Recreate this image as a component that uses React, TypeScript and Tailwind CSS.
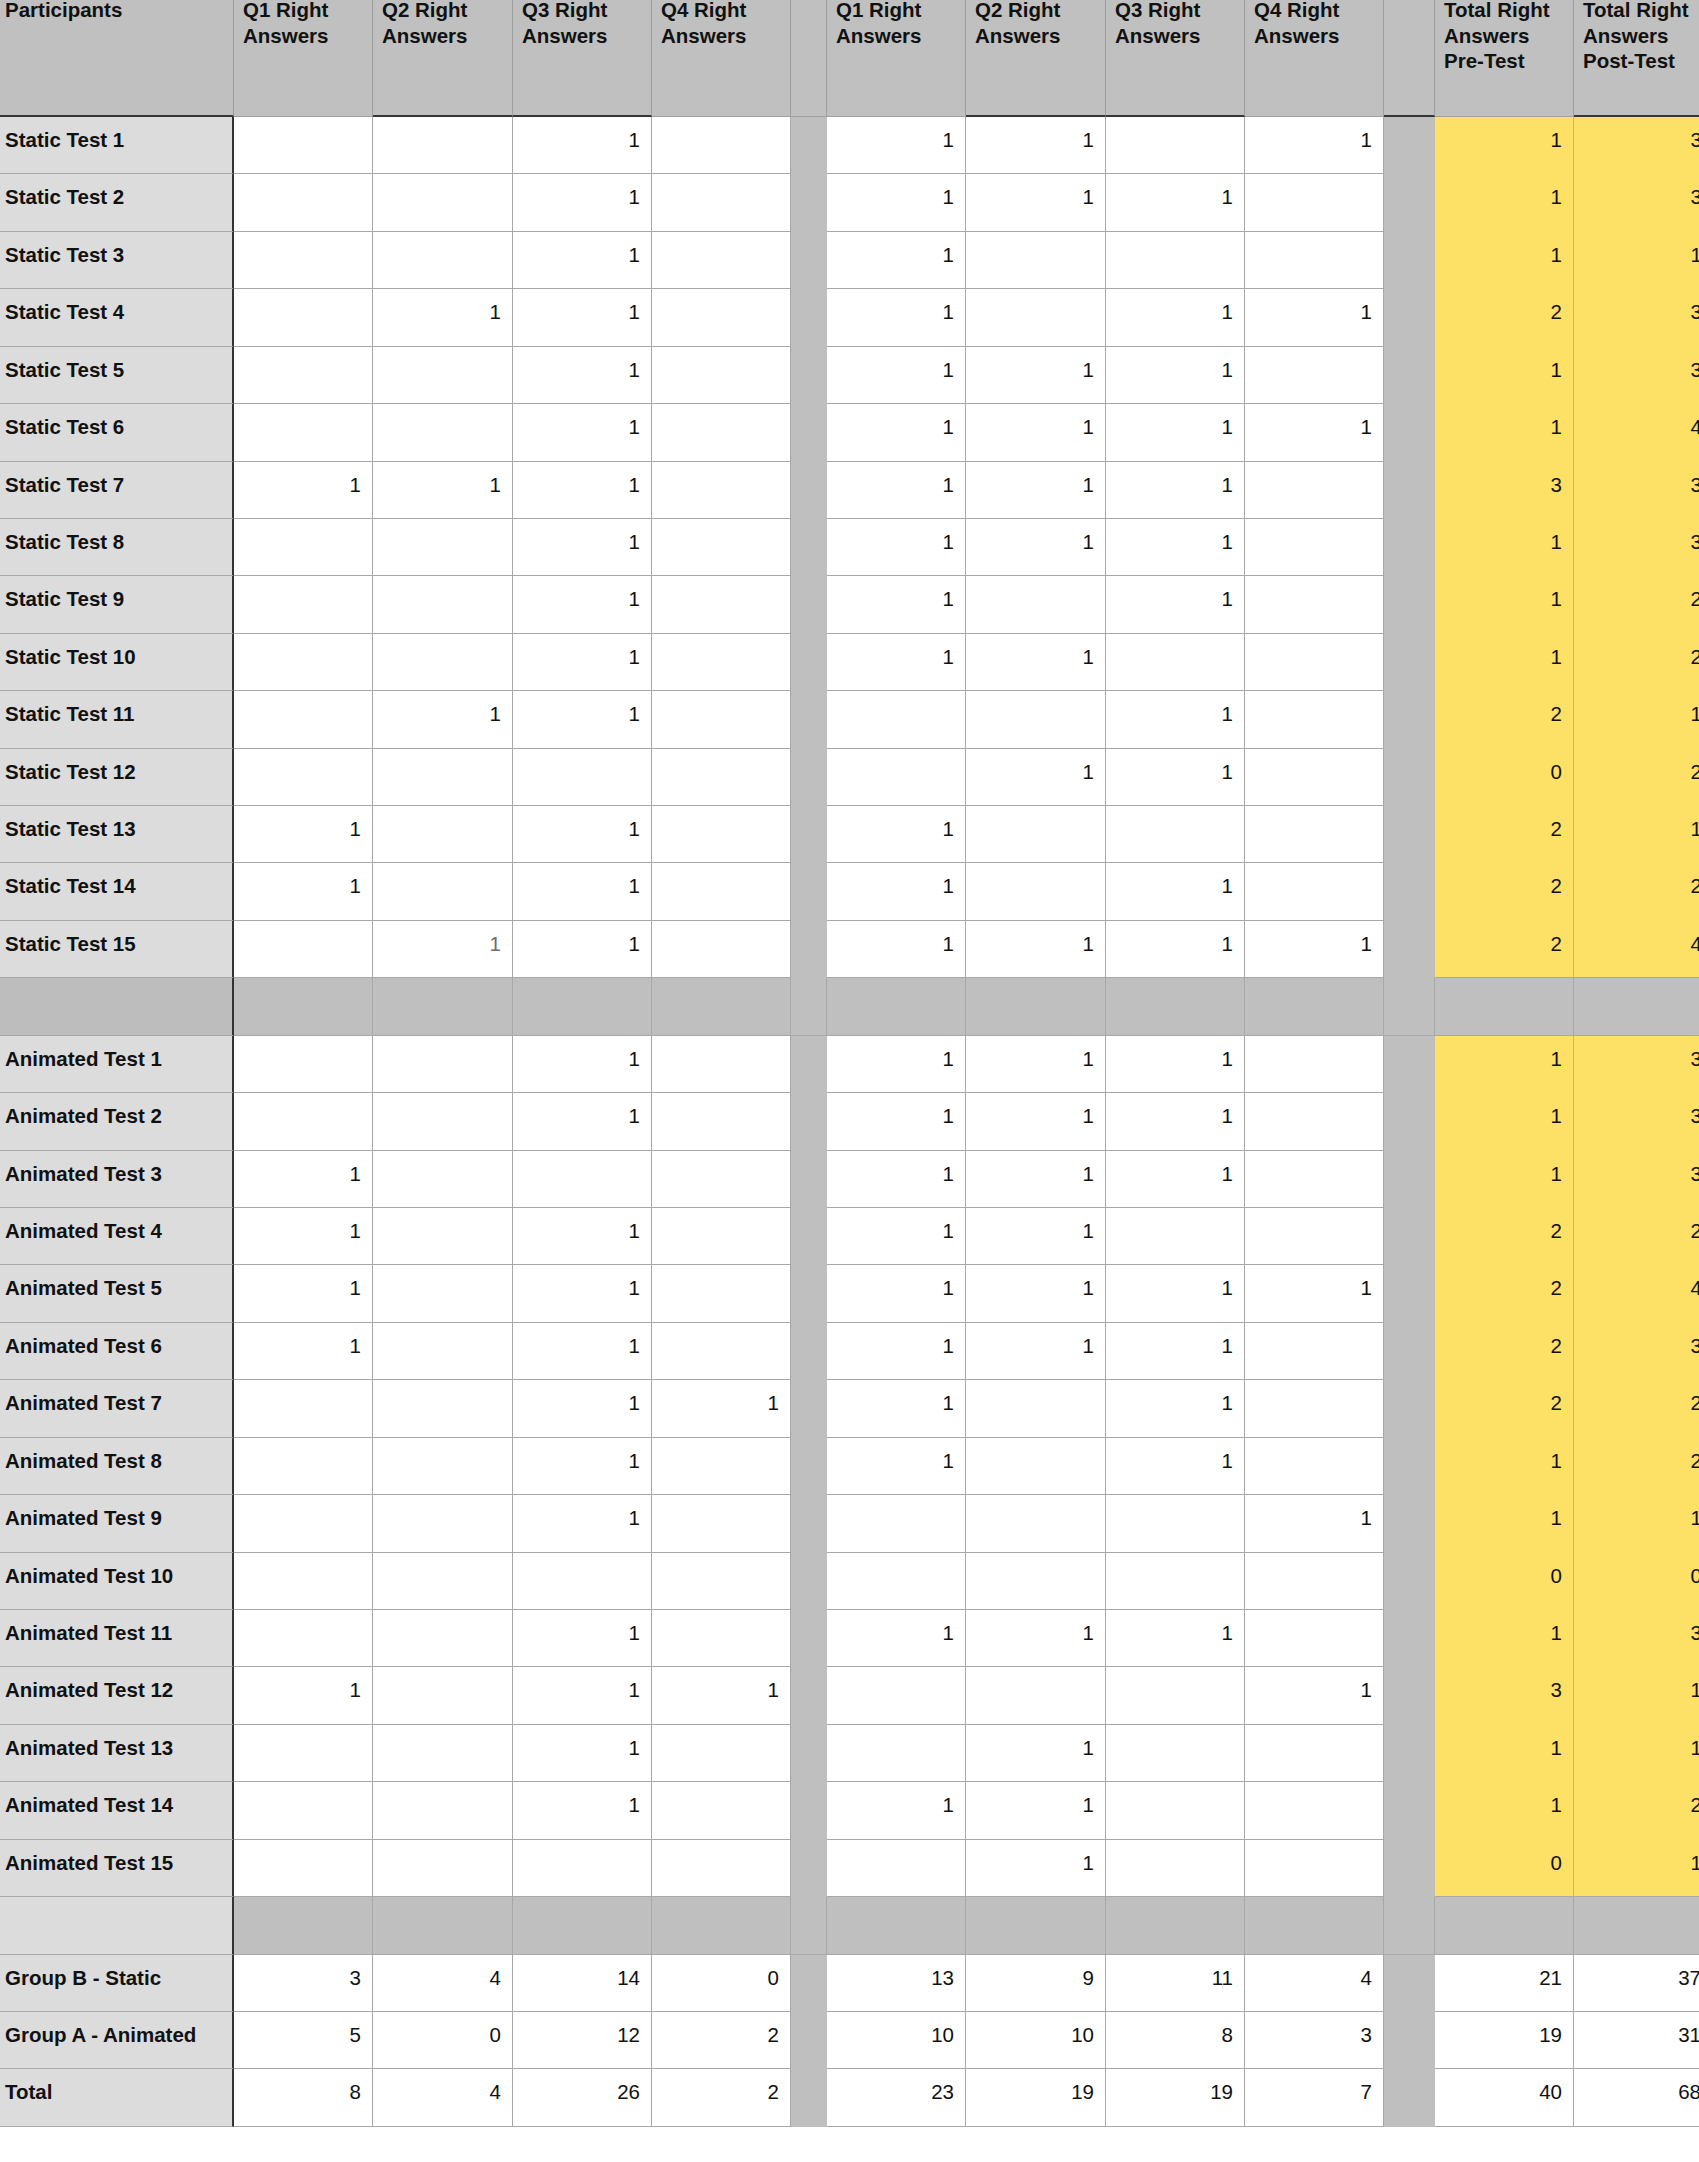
import React from "react";

// pre / post answers written as 4-char strings, "1" = right answer
type DataRow = { name: string; pre: string; post: string; tp: number; tq: number };

const staticRows: DataRow[] = [
  { name: "Static Test 1", pre: "0010", post: "1101", tp: 1, tq: 3 },
  { name: "Static Test 2", pre: "0010", post: "1110", tp: 1, tq: 3 },
  { name: "Static Test 3", pre: "0010", post: "1000", tp: 1, tq: 1 },
  { name: "Static Test 4", pre: "0110", post: "1011", tp: 2, tq: 3 },
  { name: "Static Test 5", pre: "0010", post: "1110", tp: 1, tq: 3 },
  { name: "Static Test 6", pre: "0010", post: "1111", tp: 1, tq: 4 },
  { name: "Static Test 7", pre: "1110", post: "1110", tp: 3, tq: 3 },
  { name: "Static Test 8", pre: "0010", post: "1110", tp: 1, tq: 3 },
  { name: "Static Test 9", pre: "0010", post: "1010", tp: 1, tq: 2 },
  { name: "Static Test 10", pre: "0010", post: "1100", tp: 1, tq: 2 },
  { name: "Static Test 11", pre: "0110", post: "0010", tp: 2, tq: 1 },
  { name: "Static Test 12", pre: "0000", post: "0110", tp: 0, tq: 2 },
  { name: "Static Test 13", pre: "1010", post: "1000", tp: 2, tq: 1 },
  { name: "Static Test 14", pre: "1010", post: "1010", tp: 2, tq: 2 },
  { name: "Static Test 15", pre: "0110", post: "1111", tp: 2, tq: 4 },
];

const animatedRows: DataRow[] = [
  { name: "Animated Test 1", pre: "0010", post: "1110", tp: 1, tq: 3 },
  { name: "Animated Test 2", pre: "0010", post: "1110", tp: 1, tq: 3 },
  { name: "Animated Test 3", pre: "1000", post: "1110", tp: 1, tq: 3 },
  { name: "Animated Test 4", pre: "1010", post: "1100", tp: 2, tq: 2 },
  { name: "Animated Test 5", pre: "1010", post: "1111", tp: 2, tq: 4 },
  { name: "Animated Test 6", pre: "1010", post: "1110", tp: 2, tq: 3 },
  { name: "Animated Test 7", pre: "0011", post: "1010", tp: 2, tq: 2 },
  { name: "Animated Test 8", pre: "0010", post: "1010", tp: 1, tq: 2 },
  { name: "Animated Test 9", pre: "0010", post: "0001", tp: 1, tq: 1 },
  { name: "Animated Test 10", pre: "0000", post: "0000", tp: 0, tq: 0 },
  { name: "Animated Test 11", pre: "0010", post: "1110", tp: 1, tq: 3 },
  { name: "Animated Test 12", pre: "1011", post: "0001", tp: 3, tq: 1 },
  { name: "Animated Test 13", pre: "0010", post: "0100", tp: 1, tq: 1 },
  { name: "Animated Test 14", pre: "0010", post: "1100", tp: 1, tq: 2 },
  { name: "Animated Test 15", pre: "0000", post: "0100", tp: 0, tq: 1 },
];

const summaryRows = [
  { name: "Group B - Static", values: [3, 4, 14, 0, 13, 9, 11, 4, 21, 37] },
  { name: "Group A - Animated", values: [5, 0, 12, 2, 10, 10, 8, 3, 19, 31] },
  { name: "Total", values: [8, 4, 26, 2, 23, 19, 19, 7, 40, 68] },
];

const headers = [
  "Participants",
  "Q1 Right Answers",
  "Q2 Right Answers",
  "Q3 Right Answers",
  "Q4 Right Answers",
  "",
  "Q1 Right Answers",
  "Q2 Right Answers",
  "Q3 Right Answers",
  "Q4 Right Answers",
  "",
  "Total Right Answers Pre-Test",
  "Total Right Answers Post-Test",
];

// which header cells get the heavy dark underline
const heavy = [true, false, true, true, false, false, false, true, true, false, true, false, true];

const cols =
  "grid grid-cols-[234px_139px_140px_139px_139px_36px_139px_140px_139px_139px_51px_139px_139px]";

const numCell = "bg-white text-right pr-[11px] pt-[10px] border-r border-b border-[#a8a8a8]";
const gapCell = "bg-[#bfbfbf]";
const nameCell =
  "bg-[#dcdcdc] font-bold pl-[5px] pt-[10px] whitespace-nowrap border-b border-b-[#a8a8a8] border-r-2 border-r-[#333333]";

const Header = () => (
  <div className={`${cols} h-[117px]`}>
    {headers.map((h, i) => (
      <div
        key={i}
        className={`bg-[#bfc0bf] font-bold leading-[25.5px] border-r border-r-[#9e9e9e] ${
          i === 0 ? "pl-[5px]" : "pl-[9px] pr-[4px]"
        } ${heavy[i] ? "border-b-2 border-b-[#363636]" : "border-b border-b-[#9e9e9e]"}`}
      >
        <div className="-mt-[3px]">{h}</div>
      </div>
    ))}
  </div>
);

const Row = ({ row, last }: { row: DataRow; last: boolean }) => {
  const dim = row.name === "Static Test 15";
  const cell = (v: string, k: number, faint = false) => (
    <div key={k} className={numCell}>
      <span className={faint ? "text-[#6b6b6b]" : ""}>{v === "1" ? "1" : ""}</span>
    </div>
  );
  return (
    <div className={`${cols} h-[57.43px]`}>
      <div className={nameCell}>{row.name}</div>
      {row.pre.split("").map((v, k) => cell(v, k, dim && k === 1))}
      <div className={gapCell} />
      {row.post.split("").map((v, k) => cell(v, k + 10))}
      <div className={gapCell} />
      <div
        className={`bg-[#fde066] text-right pr-[11px] pt-[10px] border-r border-r-[#c9b767] ${
          last ? "border-b border-b-[#a8a8a8]" : ""
        }`}
      >
        {row.tp}
      </div>
      <div className={`bg-[#fde066] text-right pr-[11px] pt-[10px] ${last ? "border-b border-b-[#a8a8a8]" : ""}`}>
        {row.tq}
      </div>
    </div>
  );
};

const Spacer = ({ lightName }: { lightName: boolean }) => (
  <div className={`${cols} h-[57.43px]`}>
    <div
      className={`${
        lightName ? "bg-[#dcdcdc]" : "bg-[#bdbdbd]"
      } border-b border-b-[#a8a8a8] border-r-2 border-r-[#333333]`}
    />
    {Array.from({ length: 12 }).map((_, i) => (
      <div key={i} className="bg-[#bfbfbf] border-r border-b border-[#a8a8a8]" />
    ))}
  </div>
);

const Summary = ({ name, values }: { name: string; values: number[] }) => (
  <div className={`${cols} h-[57.43px]`}>
    <div className={nameCell}>{name}</div>
    {values.slice(0, 4).map((v, k) => (
      <div key={k} className={numCell}>{v}</div>
    ))}
    <div className={gapCell} />
    {values.slice(4, 8).map((v, k) => (
      <div key={k + 10} className={numCell}>{v}</div>
    ))}
    <div className={gapCell} />
    {values.slice(8).map((v, k) => (
      <div key={k + 20} className={numCell}>{v}</div>
    ))}
  </div>
);

export default function App() {
  return (
    <div className="w-[1699px] min-h-[2162px] overflow-hidden bg-white text-[#111] text-[20.5px] leading-[25.5px] font-['Liberation_Sans',Arial,sans-serif]">
      <div className="w-[1713px]">
        <Header />
        {staticRows.map((r, i) => (
          <Row key={r.name} row={r} last={i === staticRows.length - 1} />
        ))}
        <Spacer lightName={false} />
        {animatedRows.map((r, i) => (
          <Row key={r.name} row={r} last={i === animatedRows.length - 1} />
        ))}
        <Spacer lightName={true} />
        {summaryRows.map((s) => (
          <Summary key={s.name} name={s.name} values={s.values} />
        ))}
      </div>
    </div>
  );
}
